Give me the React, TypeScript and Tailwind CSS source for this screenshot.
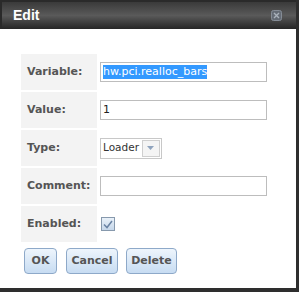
import React from 'react';

const labelCls = "w-[76px] shrink-0 bg-[#f3f3f3] flex items-center pl-[6px] text-[11px] font-bold text-[#555]";
const inputCls = "h-[20px] w-[167px] border border-[#bdbdbd] bg-white px-[2px] text-[11px] text-[#222] outline-none";

const Row: React.FC<{ label: string; children?: React.ReactNode }> = ({ label, children }) => (
    <div className="flex h-[36px]">
        <div className={labelCls}>{label}</div>
        <div className="flex items-center pl-[3px]">{children}</div>
    </div>
);

export default function App() {
    return (
        <div
            className="w-[299px] h-[292px] flex flex-col bg-white border-r-[3px] border-b-[4px] border-[#2e2e2e] overflow-hidden"
            style={{ fontFamily: '"DejaVu Sans", Verdana, sans-serif' }}
        >
            {/* Title bar */}
            <div className="h-[29px] shrink-0 flex items-center justify-between pl-[11px] pr-[14px] bg-gradient-to-b from-[#3a3a3a] via-[#5a5a5a] to-[#262626] border-t-2 border-l-2 border-[#2a2a2a]">
                <span className="text-white text-[14px] font-bold" style={{ fontFamily: '"Liberation Sans", Arial, sans-serif' }}>Edit</span>
                <svg width="11" height="11" viewBox="0 0 11 11">
                    <rect x="0.5" y="0.5" width="10" height="10" rx="2" fill="#646b75" stroke="#858c96" />
                    <path d="M3 3 L8 8 M8 3 L3 8" stroke="#a9b1bb" strokeWidth="1.4" />
                </svg>
            </div>

            {/* Form */}
            <div className="pl-[21px] pt-[25px] flex flex-col">
                <div className="flex flex-col gap-[2px]">
                    <Row label="Variable:">
                        <div className={inputCls + " flex items-center border-[#8da1b5]"}>
                            <span className="bg-[#3399ff] text-white leading-[14px]">hw.pci.realloc_bars</span>
                        </div>
                    </Row>
                    <Row label="Value:">
                        <div className={inputCls + " flex items-center"}>1</div>
                    </Row>
                    <Row label="Type:">
                        <div className="h-[21px] flex items-center border border-[#c8c8c8] bg-white">
                            <span className="pl-[2px] pr-[3px] text-[10.5px] text-[#333]">Loader</span>
                            <div className="h-[17px] w-[18px] mr-[1px] border border-[#cfcfcf] bg-[#f4f4f4] flex items-center justify-center">
                                <svg width="7" height="4" viewBox="0 0 7 4">
                                    <path d="M0 0 L7 0 L3.5 4 Z" fill="#8fa3bd" />
                                </svg>
                            </div>
                        </div>
                    </Row>
                    <Row label="Comment:">
                        <div className={inputCls}></div>
                    </Row>
                    <Row label="Enabled:">
                        <div className="w-[14px] h-[14px] border border-[#8799ad] bg-gradient-to-b from-[#e9f1f9] to-[#c6d7ea] flex items-center justify-center ml-[1px]">
                            <svg width="10" height="9" viewBox="0 0 10 9">
                                <path d="M1 4.5 L4 7.5 L9 1" fill="none" stroke="#6a83a4" strokeWidth="1.5" />
                            </svg>
                        </div>
                    </Row>
                </div>

                <div className="flex pl-[3px] pt-[6px] gap-[8px]">
                    {[
                        { t: 'OK', w: 'w-[33px]' },
                        { t: 'Cancel', w: 'w-[52px] ml-[1px]' },
                        { t: 'Delete', w: 'w-[51px]' },
                    ].map(b => (
                        <button
                            key={b.t}
                            className={`${b.w} h-[26px] rounded-[4px] border border-[#8ea9c9] bg-gradient-to-b from-[#eef5fc] to-[#c7dcf2] text-[11px] font-bold text-[#555] flex items-center justify-center`}
                        >
                            {b.t}
                        </button>
                    ))}
                </div>
            </div>
        </div>
    );
}
